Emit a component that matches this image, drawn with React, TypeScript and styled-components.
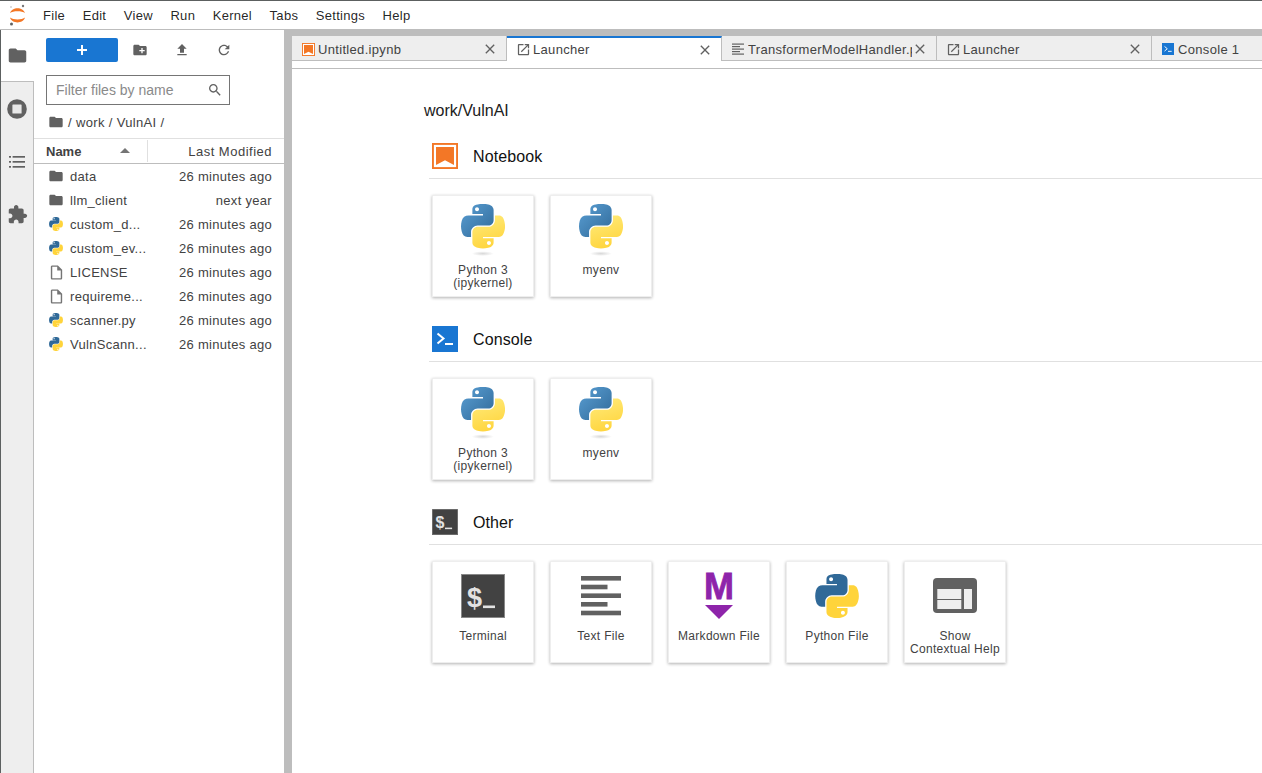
import React from "react";
import styled, { createGlobalStyle } from "styled-components";

const GlobalStyle = createGlobalStyle`
  html, body, #root {
    height: 100%;
    margin: 0;
  }
  body {
    font-family: "Liberation Sans", Arial, sans-serif;
    overflow: hidden;
    background: #fff;
  }
  * {
    box-sizing: border-box;
  }
`;

const paths = {
  folder: "M10 4H4c-1.1 0-2 .9-2 2v12c0 1.1.9 2 2 2h16c1.1 0 2-.9 2-2V8c0-1.1-.9-2-2-2h-8l-2-2z",
  newFolder:
    "M20 6h-8l-2-2H4c-1.1 0-1.99.9-1.99 2L2 18c0 1.1.9 2 2 2h16c1.1 0 2-.9 2-2V8c0-1.1-.9-2-2-2zm-1 8h-3v3h-2v-3h-3v-2h3V9h2v3h3v2z",
  upload: "M9 16h6v-6h4l-7-7-7 7h4zm-4 2h14v2H5z",
  refresh:
    "M17.65 6.35C16.2 4.9 14.21 4 12 4c-4.42 0-7.99 3.58-7.99 8s3.57 8 7.99 8c3.73 0 6.84-2.55 7.73-6h-2.08c-.82 2.33-3.04 4-5.65 4-3.31 0-6-2.69-6-6s2.69-6 6-6c1.66 0 3.14.69 4.22 1.78L13 11h7V4l-2.35 2.35z",
  extension:
    "M20.5 11H19V7c0-1.1-.9-2-2-2h-4V3.5C13 2.12 11.88 1 10.5 1S8 2.12 8 3.5V5H4c-1.1 0-1.99.9-1.99 2v3.8H3.5c1.49 0 2.7 1.21 2.7 2.7s-1.21 2.7-2.7 2.7H2V20c0 1.1.9 2 2 2h3.8v-1.5c0-1.49 1.21-2.7 2.7-2.7 1.49 0 2.7 1.21 2.7 2.7V22H17c1.1 0 2-.9 2-2v-4h1.5c1.38 0 2.5-1.12 2.5-2.5S21.88 11 20.5 11z",
  launch:
    "M19 19H5V5h7V3H5c-1.11 0-2 .9-2 2v14c0 1.1.89 2 2 2h14c1.1 0 2-.9 2-2v-7h-2v7zM14 3v2h3.59l-9.83 9.83 1.41 1.41L19 6.41V10h2V3h-7z",
  file: "M14 2H6c-1.1 0-2 .9-2 2v16c0 1.1.9 2 2 2h12c1.1 0 2-.9 2-2V8l-6-6zm4 18H6V4h7v5h5v11z",
  search:
    "M15.5 14h-.79l-.28-.27C15.41 12.59 16 11.11 16 9.5 16 5.91 13.09 3 9.5 3S3 5.91 3 9.5 5.91 16 9.5 16c1.61 0 3.09-.59 4.23-1.57l.27.28v.79l5 4.99L20.49 19l-4.99-5zm-6 0C7.01 14 5 11.99 5 9.5S7.01 5 9.5 5 14 7.01 14 9.5 11.99 14 9.5 14z",
  close: "M19 6.41 17.59 5 12 10.59 6.41 5 5 6.41 10.59 12 5 17.59 6.41 19 12 13.41 17.59 19 19 17.59 13.41 12z",
};

const Icon = ({ d, size, color }: { d: string; size: number; color: string }) => (
  <svg width={size} height={size} viewBox="0 0 24 24" style={{ flexShrink: 0 }}>
    <path d={d} fill={color} />
  </svg>
);

const PY_BLUE =
  "M 54.918785,9.1927421e-4 C 50.335132,0.02221727 45.957846,0.41313697 42.106285,1.0946693 30.760069,3.0991731 28.700036,7.2947714 28.700035,15.032169 v 10.21875 h 26.8125 v 3.40625 h -26.8125 -10.0625 c -7.792459,0 -14.6157588,4.683717 -16.7499998,13.59375 -2.46181998,10.212966 -2.57101508,16.586023 0,27.25 1.9059283,7.937852 6.4575432,13.593748 14.2499998,13.59375 h 9.21875 v -12.25 c 0,-8.849902 7.657144,-16.656248 16.75,-16.65625 h 26.78125 c 7.454951,0 13.406253,-6.138164 13.40625,-13.625 v -25.53125 c 0,-7.2663386 -6.12998,-12.7247771 -13.40625,-13.9374997 C 64.281548,0.32794397 59.502438,-0.02037903 54.918785,9.1927421e-4 Z m -14.5,8.21875012579 c 2.769547,0 5.03125,2.2986456 5.03125,5.1249996 -2e-6,2.816336 -2.261703,5.09375 -5.03125,5.09375 -2.779476,-1e-6 -5.03125,-2.277415 -5.03125,-5.09375 -10e-7,-2.826353 2.251774,-5.1249996 5.03125,-5.1249996 z";
const PY_YELLOW =
  "m 85.637535,28.657169 v 11.90625 c 0,9.230755 -7.825895,16.999999 -16.75,17 h -26.78125 c -7.335833,0 -13.406249,6.278483 -13.40625,13.625 v 25.531247 c 0,7.266344 6.318588,11.540324 13.40625,13.625004 8.487331,2.49561 16.626237,2.94663 26.78125,0 6.750155,-1.95439 13.406253,-5.88761 13.40625,-13.625004 V 86.500919 h -26.78125 v -3.40625 h 26.78125 13.406254 c 7.792461,0 10.696251,-5.435408 13.406241,-13.59375 2.79933,-8.398886 2.74544,-16.475776 0,-27.25 -1.92578,-7.757441 -5.60387,-13.59375 -13.406241,-13.59375 z m -15.0625,64.65625 c 2.779478,3e-6 5.03125,2.277417 5.03125,5.093747 -2e-6,2.826354 -2.261775,5.125004 -5.03125,5.125004 -2.76955,0 -5.03125,-2.29865 -5.03125,-5.125004 2e-6,-2.81633 2.261697,-5.093747 5.03125,-5.093747 z";

const PythonFlat = ({ size }: { size: number }) => (
  <svg width={size} height={size} viewBox="0 0 111 112" style={{ flexShrink: 0 }}>
    <path d={PY_BLUE} fill="#306998" />
    <path d={PY_YELLOW} fill="#ffd43b" />
  </svg>
);

const KernelLogo = ({ id }: { id: string }) => (
  <svg width="44" height="56" viewBox="0 0 111 141">
    <defs>
      <linearGradient id={`${id}b`} x1="0" y1="0" x2="1" y2="1">
        <stop offset="0" stopColor="#5a9fd4" />
        <stop offset="1" stopColor="#306998" />
      </linearGradient>
      <linearGradient id={`${id}y`} x1="0.3" y1="0.1" x2="0.6" y2="1">
        <stop offset="0" stopColor="#ffe873" />
        <stop offset="1" stopColor="#ffd43b" />
      </linearGradient>
      <radialGradient id={`${id}s`}>
        <stop offset="0" stopColor="#b8b8b8" stopOpacity="0.55" />
        <stop offset="1" stopColor="#b8b8b8" stopOpacity="0" />
      </radialGradient>
    </defs>
    <path d={PY_BLUE} fill={`url(#${id}b)`} />
    <path d={PY_YELLOW} fill={`url(#${id}y)`} />
    <ellipse cx="55" cy="125" rx="28" ry="6" fill={`url(#${id}s)`} />
  </svg>
);

const NotebookBadge = ({ size }: { size: number }) => (
  <svg width={size} height={size} viewBox="0 0 22 22" style={{ flexShrink: 0 }}>
    <rect x="0" y="0" width="22" height="22" fill="#f37726" />
    <rect x="1.6" y="1.6" width="18.8" height="18.8" fill="#fff" />
    <path d="M3.4 3.4h15.2v15.2L11 14.6l-7.6 4z" fill="#f37726" />
  </svg>
);

const ConsoleBadge = ({ size }: { size: number }) => (
  <svg width={size} height={size} viewBox="0 0 26 26" style={{ flexShrink: 0 }}>
    <rect width="26" height="26" fill="#1976d2" />
    <path d="M5.5 7.5 11.5 12.5 5.5 17.5" fill="none" stroke="#fff" strokeWidth="2" />
    <rect x="13" y="17" width="8" height="2" fill="#fff" />
  </svg>
);

const TerminalBadge = ({ size }: { size: number }) => (
  <svg width={size} height={size} viewBox="0 0 44 44" style={{ flexShrink: 0 }}>
    <rect width="44" height="44" fill="#424242" />
    <rect x=".5" y=".5" width="43" height="43" fill="none" stroke="#888" />
    <text x="6" y="33" fontFamily="'Liberation Sans', sans-serif" fontWeight="700" fontSize="27" fill="#e2e2e2">
      $
    </text>
    <rect x="22" y="31.5" width="12" height="2.6" fill="#e2e2e2" />
  </svg>
);

const TextFileLogo = () => (
  <svg width="44" height="44" viewBox="0 0 44 44">
    <g fill="#616161">
      <rect x="2" y="2" width="40" height="4.6" />
      <rect x="2" y="10.7" width="26.5" height="4.6" />
      <rect x="2" y="19.4" width="40" height="4.6" />
      <rect x="2" y="28" width="26.5" height="4.6" />
      <rect x="2" y="36.7" width="40" height="4.6" />
    </g>
  </svg>
);

const MarkdownLogo = () => (
  <svg width="44" height="46" viewBox="0 0 44 46" style={{ overflow: "visible" }}>
    <text x="22" y="25" textAnchor="middle" fontFamily="'Liberation Sans', sans-serif" fontWeight="700" fontSize="36" fill="#8e24aa" stroke="#8e24aa" strokeWidth=".8" textLength="30" lengthAdjust="spacingAndGlyphs">
      M
    </text>
    <path d="M8 31h28L22 45z" fill="#8e24aa" />
  </svg>
);

const HelpLogo = () => (
  <svg width="44" height="44" viewBox="0 -4 44 44">
    <rect width="44" height="35" rx="4" fill="#616161" />
    <g fill="#eeeeee">
      <rect x="4.3" y="11" width="24" height="10" />
      <rect x="4.3" y="22" width="24" height="9" />
      <rect x="31" y="11" width="8" height="20" />
    </g>
  </svg>
);

const JupyterLogo = () => (
  <svg width="20" height="24" viewBox="0 0 20 24">
    <path d="M3 10C5 3.5 16 3.5 18 10 15 7.5 6 7.5 3 10z" fill="#f37726" />
    <path d="M3 14.5C6 17 15 17 18 14.5 16 21 5 21 3 14.5z" fill="#f37726" />
    <circle cx="16" cy="3" r="1.2" fill="#767677" />
    <circle cx="4" cy="4" r=".7" fill="#9e9e9e" />
    <circle cx="4.5" cy="21" r="1.5" fill="#616262" />
  </svg>
);

const StopLogo = () => (
  <svg width="22" height="22" viewBox="0 0 22 22">
    <circle cx="11" cy="11" r="9.8" fill="#616161" />
    <rect x="6.4" y="6.4" width="9.2" height="9.2" rx=".6" fill="#e8e8e8" />
  </svg>
);

const ListLogo = () => (
  <svg width="16" height="14" viewBox="0 0 16 14">
    <g fill="#616161">
      <rect x="0" y="1" width="2" height="1.7" />
      <rect x="3.6" y="1" width="12.4" height="1.7" />
      <rect x="0" y="6" width="2" height="1.7" />
      <rect x="3.6" y="6" width="12.4" height="1.7" />
      <rect x="0" y="11" width="2" height="1.7" />
      <rect x="3.6" y="11" width="12.4" height="1.7" />
    </g>
  </svg>
);

const TextTabIcon = () => (
  <svg width="14" height="14" viewBox="0 0 14 14" style={{ flexShrink: 0 }}>
    <g fill="#616161">
      <rect x="1" y="1.5" width="12" height="1.2" />
      <rect x="1" y="4" width="8" height="1.2" />
      <rect x="1" y="6.5" width="12" height="1.2" />
      <rect x="1" y="9" width="8" height="1.2" />
      <rect x="1" y="11.5" width="12" height="1.2" />
    </g>
  </svg>
);

type FileRow = { name: string; kind: "folder" | "python" | "file"; modified: string };

const files: FileRow[] = [
  { name: "data", kind: "folder", modified: "26 minutes ago" },
  { name: "llm_client", kind: "folder", modified: "next year" },
  { name: "custom_d...", kind: "python", modified: "26 minutes ago" },
  { name: "custom_ev...", kind: "python", modified: "26 minutes ago" },
  { name: "LICENSE", kind: "file", modified: "26 minutes ago" },
  { name: "requireme...", kind: "file", modified: "26 minutes ago" },
  { name: "scanner.py", kind: "python", modified: "26 minutes ago" },
  { name: "VulnScann...", kind: "python", modified: "26 minutes ago" },
];

const menus = ["File", "Edit", "View", "Run", "Kernel", "Tabs", "Settings", "Help"];

const tabs = [
  { label: "Untitled.ipynb", icon: <NotebookBadge size={13} />, active: false, closable: true },
  { label: "Launcher", icon: <Icon d={paths.launch} size={15} color="#616161" />, active: true, closable: true },
  { label: "TransformerModelHandler.py", icon: <TextTabIcon />, active: false, closable: true },
  { label: "Launcher", icon: <Icon d={paths.launch} size={15} color="#616161" />, active: false, closable: true },
  { label: "Console 1", icon: <ConsoleBadge size={12} />, active: false, closable: false },
];

const sections = [
  {
    title: "Notebook",
    badge: <NotebookBadge size={26} />,
    cards: [
      { label: "Python 3\n(ipykernel)", logo: <KernelLogo id="n1" />, kernel: true },
      { label: "myenv", logo: <KernelLogo id="n2" />, kernel: true },
    ],
  },
  {
    title: "Console",
    badge: <ConsoleBadge size={26} />,
    cards: [
      { label: "Python 3\n(ipykernel)", logo: <KernelLogo id="c1" />, kernel: true },
      { label: "myenv", logo: <KernelLogo id="c2" />, kernel: true },
    ],
  },
  {
    title: "Other",
    badge: <TerminalBadge size={26} />,
    cards: [
      { label: "Terminal", logo: <TerminalBadge size={44} />, kernel: false },
      { label: "Text File", logo: <TextFileLogo />, kernel: false },
      { label: "Markdown File", logo: <MarkdownLogo />, kernel: false },
      { label: "Python File", logo: <PythonFlat size={44} />, kernel: false },
      { label: "Show\nContextual Help", logo: <HelpLogo />, kernel: false },
    ],
  },
];

const App = () => (
  <Page>
    <GlobalStyle />
    <MenuBar>
      <LogoSlot>
        <JupyterLogo />
      </LogoSlot>
      {menus.map((m) => (
        <MenuItem key={m}>{m}</MenuItem>
      ))}
    </MenuBar>
    <Body>
      <Rail>
        <RailTab $active>
          <Icon d={paths.folder} size={21} color="#616161" />
        </RailTab>
        <RailTab>
          <StopLogo />
        </RailTab>
        <RailTab>
          <ListLogo />
        </RailTab>
        <RailTab>
          <Icon d={paths.extension} size={21} color="#616161" />
        </RailTab>
      </Rail>
      <SidePanel>
        <Toolbar>
          <NewButton>
            <svg width="12" height="12" viewBox="0 0 12 12">
              <path d="M5 1h2v4h4v2H7v4H5V7H1V5h4z" fill="#fff" />
            </svg>
          </NewButton>
          <ToolButton>
            <Icon d={paths.newFolder} size={16} color="#616161" />
          </ToolButton>
          <ToolButton>
            <Icon d={paths.upload} size={16} color="#616161" />
          </ToolButton>
          <ToolButton>
            <Icon d={paths.refresh} size={16} color="#616161" />
          </ToolButton>
        </Toolbar>
        <FilterBox>
          <FilterInput placeholder="Filter files by name" />
          <Icon d={paths.search} size={16} color="#616161" />
        </FilterBox>
        <Crumbs>
          <Icon d={paths.folder} size={16} color="#616161" />
          <span>/ work / VulnAI /</span>
        </Crumbs>
        <ListHeader>
          <NameHead>
            Name
            <Caret />
          </NameHead>
          <ModifiedHead>Last Modified</ModifiedHead>
        </ListHeader>
        {files.map((f) => (
          <Row key={f.name}>
            <RowIcon>
              {f.kind === "folder" && <Icon d={paths.folder} size={16} color="#616161" />}
              {f.kind === "python" && <PythonFlat size={14} />}
              {f.kind === "file" && <Icon d={paths.file} size={17} color="#757575" />}
            </RowIcon>
            <RowName>{f.name}</RowName>
            <RowTime>{f.modified}</RowTime>
          </Row>
        ))}
      </SidePanel>
      <Splitter />
      <Main>
        <TabBar>
          {tabs.map((t, i) => (
            <Tab key={i} $active={t.active}>
              <TabIcon>{t.icon}</TabIcon>
              <TabLabel>{t.label}</TabLabel>
              {t.closable && (
                <TabClose>
                  <Icon d={paths.close} size={16} color="#616161" />
                </TabClose>
              )}
            </Tab>
          ))}
        </TabBar>
        <TabGap />
        <Launcher>
          <CwdLabel>work/VulnAI</CwdLabel>
          {sections.map((s) => (
            <Section key={s.title}>
              <SectionHead>
                {s.badge}
                <SectionTitle>{s.title}</SectionTitle>
              </SectionHead>
              <Cards>
                {s.cards.map((c, i) => (
                  <Card key={i}>
                    <CardLogo $kernel={c.kernel}>{c.logo}</CardLogo>
                    <CardLabel>{c.label}</CardLabel>
                  </Card>
                ))}
              </Cards>
            </Section>
          ))}
        </Launcher>
      </Main>
    </Body>
  </Page>
);

export default App;

const Page = styled.div`
  display: flex;
  flex-direction: column;
  height: 100vh;
  border-top: 1px solid #5c6060;
  color: #424242;
`;

const MenuBar = styled.div`
  display: flex;
  align-items: center;
  height: 28px;
  flex-shrink: 0;
  background: #fff;
`;

const LogoSlot = styled.div`
  display: flex;
  width: 34.25px;
  padding-left: 7px;
`;

const MenuItem = styled.div`
  padding: 1px 8.75px 0;
  font-size: 13px;
  letter-spacing: 0.3px;
  color: rgba(0, 0, 0, 0.87);
`;

const Body = styled.div`
  display: flex;
  flex: 1;
  min-height: 0;
  border-top: 1px solid #bdbdbd;
`;

const Rail = styled.div`
  display: flex;
  flex-direction: column;
  width: 34px;
  flex-shrink: 0;
  background: #eeeeee;
  border-left: 1px solid #5c6060;
  border-right: 1px solid #bdbdbd;
`;

const RailTab = styled.div<{ $active?: boolean }>`
  display: flex;
  align-items: center;
  justify-content: center;
  height: ${(p) => (p.$active ? "52px" : "53px")};
  margin-right: ${(p) => (p.$active ? "-1px" : "0")};
  background: ${(p) => (p.$active ? "#fff" : "transparent")};
  border-bottom: ${(p) => (p.$active ? "1px solid #bdbdbd" : "none")};
`;

const SidePanel = styled.div`
  display: flex;
  flex-direction: column;
  width: 250px;
  flex-shrink: 0;
  background: #fff;
`;

const Toolbar = styled.div`
  display: flex;
  align-items: center;
  height: 24px;
  margin: 8px 0 0 12px;
`;

const NewButton = styled.div`
  display: flex;
  align-items: center;
  justify-content: center;
  width: 72px;
  height: 24px;
  margin-right: 1px;
  border-radius: 2px;
  background: #1976d2;
`;

const ToolButton = styled.div`
  display: flex;
  align-items: center;
  justify-content: center;
  width: 42px;
`;

const FilterBox = styled.div`
  display: flex;
  align-items: center;
  width: 184px;
  height: 30px;
  margin: 13px 0 0 12px;
  padding: 0 6px 0 9px;
  border: 1px solid #757575;
`;

const FilterInput = styled.input`
  flex: 1;
  min-width: 0;
  border: none;
  outline: none;
  padding: 0;
  font: 14px "Liberation Sans", Arial, sans-serif;
  &::placeholder {
    color: #8a8a8a;
    opacity: 1;
  }
`;

const Crumbs = styled.div`
  display: flex;
  align-items: center;
  gap: 4px;
  height: 24px;
  margin: 5px 0 0 14px;
  font-size: 13px;
  letter-spacing: 0.35px;
  color: #424242;
`;

const ListHeader = styled.div`
  display: flex;
  height: 26px;
  margin-top: 4px;
  border-top: 1px solid #e0e0e0;
  border-bottom: 1px solid #bdbdbd;
  font-size: 13px;
`;

const NameHead = styled.div`
  position: relative;
  display: flex;
  align-items: center;
  width: 114px;
  padding-left: 12px;
  border-right: 1px solid #e0e0e0;
  margin: 1px 0;
  font-weight: 700;
  color: #424242;
`;

const Caret = styled.span`
  position: absolute;
  left: 86px;
  top: 8px;
  border-left: 5px solid transparent;
  border-right: 5px solid transparent;
  border-bottom: 5px solid #757575;
`;

const ModifiedHead = styled.div`
  display: flex;
  align-items: center;
  justify-content: flex-end;
  flex: 1;
  padding-right: 12px;
  letter-spacing: 0.5px;
`;

const Row = styled.div`
  display: flex;
  align-items: center;
  height: 24px;
  padding: 0 12px 0 14px;
  font-size: 13px;
  letter-spacing: 0.3px;
`;

const RowIcon = styled.div`
  display: flex;
  align-items: center;
  justify-content: center;
  width: 16px;
  flex-shrink: 0;
`;

const RowName = styled.span`
  margin-left: 6px;
  white-space: nowrap;
`;

const RowTime = styled.span`
  margin-left: auto;
  white-space: nowrap;
`;

const Splitter = styled.div`
  width: 8px;
  flex-shrink: 0;
  background: #bdbdbd;
`;

const Main = styled.div`
  display: flex;
  flex-direction: column;
  flex: 1;
  min-width: 0;
  overflow: hidden;
`;

const TabBar = styled.div`
  display: flex;
  flex-shrink: 0;
  height: 31px;
  padding-top: 6px;
  background: #bdbdbd;
`;

const Tab = styled.div<{ $active: boolean }>`
  display: flex;
  align-items: center;
  gap: 3px;
  width: 215px;
  flex-shrink: 0;
  height: 25px;
  padding: ${(p) => (p.$active ? "0 8px 0 9px" : "2px 8px 0 9px")};
  font-size: 13px;
  letter-spacing: 0.32px;
  background: ${(p) => (p.$active ? "#fff" : "#eeeeee")};
  border-right: 1px solid #bdbdbd;
  border-bottom: ${(p) => (p.$active ? "none" : "1px solid #bdbdbd")};
  border-top: ${(p) => (p.$active ? "2px solid #1976d2" : "none")};
`;

const TabIcon = styled.div`
  display: flex;
  align-items: center;
  justify-content: center;
  width: 14px;
  flex-shrink: 0;
`;

const TabLabel = styled.span`
  flex: 1;
  min-width: 0;
  white-space: nowrap;
  overflow: hidden;
`;

const TabClose = styled.div`
  display: flex;
  margin-left: -3px;
`;

const TabGap = styled.div`
  height: 8px;
  flex-shrink: 0;
  border-bottom: 1px solid #bdbdbd;
`;

const Launcher = styled.div`
  flex: 1;
  padding: 32px 0 0 132px;
`;

const CwdLabel = styled.div`
  height: 20px;
  margin-bottom: 10px;
  font-size: 16px;
  line-height: 20px;
  color: #212121;
`;

const Section = styled.div`
  margin: 0 0 0 5px;
  padding-top: 12px;
  height: 183px;
`;

const SectionHead = styled.div`
  display: flex;
  align-items: center;
  gap: 15px;
  height: 36px;
  padding: 0 0 9px 3px;
  border-bottom: 1px solid #e0e0e0;
`;

const SectionTitle = styled.div`
  margin-top: 2px;
  font-size: 16px;
  letter-spacing: 0.1px;
  color: #111;
`;

const Cards = styled.div`
  display: flex;
  gap: 16px;
  margin: 16px 0 0 3px;
`;

const Card = styled.div`
  display: flex;
  flex-direction: column;
  align-items: center;
  width: 102px;
  height: 102px;
  border: 1px solid #eeeeee;
  background: #fff;
  box-shadow: 0 1px 3px rgba(0, 0, 0, 0.3);
`;

const CardLogo = styled.div<{ $kernel: boolean }>`
  display: flex;
  justify-content: center;
  height: 64px;
  padding-top: ${(p) => (p.$kernel ? "8px" : "12px")};
`;

const CardLabel = styled.div`
  margin-top: 4px;
  font-size: 12px;
  line-height: 13px;
  letter-spacing: 0.3px;
  text-align: center;
  white-space: pre-line;
  color: #424242;
`;
